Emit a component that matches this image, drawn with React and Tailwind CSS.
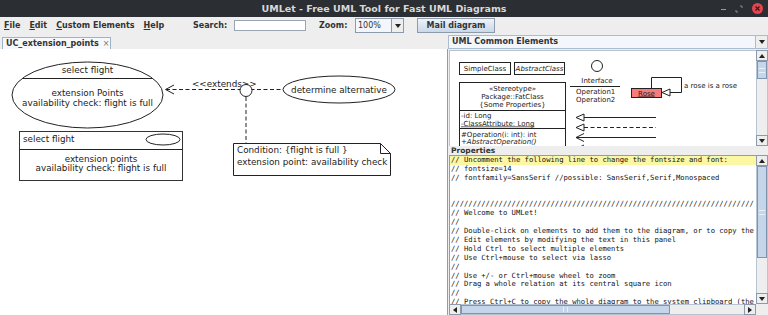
const CODE = [
  "// Uncomment the following line to change the fontsize and font:",
  "// fontsize=14",
  "// fontfamily=SansSerif //possible: SansSerif,Serif,Monospaced",
  "",
  "",
  "//////////////////////////////////////////////////////////////////////",
  "// Welcome to UMLet!",
  "//",
  "// Double-click on elements to add them to the diagram, or to copy the",
  "// Edit elements by modifying the text in this panel",
  "// Hold Ctrl to select multiple elements",
  "// Use Ctrl+mouse to select via lasso",
  "//",
  "// Use +/- or Ctrl+mouse wheel to zoom",
  "// Drag a whole relation at its central square icon",
  "//",
  "// Press Ctrl+C to copy the whole diagram to the system clipboard (the",
];

const TX = "font-['DejaVu_Sans',sans-serif] text-[8.8px] fill-[#222] stroke-none";
const PX = "font-['DejaVu_Sans',sans-serif] text-[7px] fill-[#222] stroke-none";
const PXI = "font-['DejaVu_Sans',sans-serif] text-[7px] italic fill-[#222] stroke-none";

function Arrow({ dir }) {
  const pts = {
    up: "1,6 4,2 7,6",
    down: "1,2 4,6 7,2",
    left: "6,1 2,4 6,7",
    right: "2,1 6,4 2,7",
  }[dir];
  return (
    <svg width="8" height="8" viewBox="0 0 8 8">
      <polygon points={pts} fill="#222" />
    </svg>
  );
}

function ScrollBtn({ dir, cls }) {
  return (
    <div className={`shrink-0 flex items-center justify-center bg-[#eeeeee] border border-[#8c9aab] ${cls}`}>
      <Arrow dir={dir} />
    </div>
  );
}

function TitleBar() {
  return (
    <div className="h-[17px] shrink-0 bg-[#2b2e32] grid grid-cols-[1fr_auto_1fr] items-center">
      <div />
      <div className="text-[9.5px] font-bold text-[#d8d8d8] leading-none">
        UMLet - Free UML Tool for Fast UML Diagrams
      </div>
      <div className="flex justify-end items-center gap-[9px] pr-[5px]">
        <div className="w-[5px] h-[1px] bg-[#9a9a9a] mt-[1px]" />
        <svg width="8" height="8" viewBox="0 0 8 8">
          <path d="M5 1 H7 V3 M3 7 H1 V5" stroke="#8a8a8a" strokeWidth="1" fill="none" />
        </svg>
        <svg width="11" height="11" viewBox="0 0 11 11">
          <circle cx="5.5" cy="5.5" r="5.5" fill="#e2454f" />
          <path d="M3.5 3.5 L7.5 7.5 M7.5 3.5 L3.5 7.5" stroke="#3a1a1c" strokeWidth="1.3" />
        </svg>
      </div>
    </div>
  );
}

function MenuBar() {
  return (
    <div className="h-[17px] shrink-0 flex items-center text-[8px] font-bold text-[#333] leading-none">
      <div className="w-[193px] shrink-0 flex items-center gap-[9px] pl-[4px]">
        <span><span className="underline">F</span>ile</span>
        <span><span className="underline">E</span>dit</span>
        <span><span className="underline">C</span>ustom Elements</span>
        <span><span className="underline">H</span>elp</span>
      </div>
      <span className="w-[41px] shrink-0">Search:</span>
      <div className="w-[72px] shrink-0 h-[11px] bg-white border border-[#9aa5b2]" />
      <span className="w-[36px] shrink-0 ml-[13px]">Zoom:</span>
      <div className="w-[49px] shrink-0 h-[15px] flex border border-[#8c9aab] bg-[#f3f6fa]">
        <div className="flex-1 flex items-center pl-[2px] font-normal text-[8px]">100%</div>
        <div className="w-[12px] flex items-center justify-center border-l border-[#8c9aab] bg-[#eeeeee]">
          <Arrow dir="down" />
        </div>
      </div>
      <div className="ml-[13px] shrink-0 w-[78px] h-[15px] flex items-center justify-center border border-[#8c9aab] bg-gradient-to-b from-[#eef3f9] to-[#c9d8e8]">
        Mail diagram
      </div>
    </div>
  );
}

function Canvas() {
  return (
    <svg className="block" width="447" height="266" viewBox="0 0 447 266">
      <g transform="translate(0,-49)" stroke="#222" strokeWidth="1" fill="none">
        <ellipse cx="87.5" cy="95" rx="75.5" ry="33" fill="white" />
        <line x1="23" y1="78.5" x2="152" y2="78.5" />
        <text x="87.5" y="73" textAnchor="middle" className={TX}>select flight</text>
        <text x="87.5" y="96" textAnchor="middle" className={TX}>extension Points</text>
        <text x="87.5" y="106" textAnchor="middle" className={TX}>availability check: flight is full</text>

        <line x1="166" y1="89.5" x2="283" y2="89.5" strokeDasharray="4 2.5" />
        <polyline points="174,85 165.5,89.5 174,94" />
        <text x="192" y="87" className={TX}>&lt;&lt;extends&gt;&gt;</text>
        <line x1="246" y1="97" x2="246" y2="143" strokeDasharray="4 2.5" />
        <circle cx="246" cy="90.5" r="6" fill="white" />

        <ellipse cx="339" cy="89.5" rx="56" ry="13.5" fill="white" />
        <text x="339" y="93" textAnchor="middle" className={TX}>determine alternative</text>

        <path d="M233.5 143.5 H380.5 L390.5 153.5 V175.5 H233.5 Z" fill="white" />
        <path d="M380.5 143.5 V153.5 H390.5" />
        <text x="237" y="153" className={TX}>Condition: {"{flight is full }"}</text>
        <text x="237" y="165" className={TX}>extension point: availability check</text>

        <rect x="19.5" y="131.5" width="163" height="49" fill="white" stroke="#333" />
        <line x1="19.5" y1="149.5" x2="182.5" y2="149.5" />
        <text x="23" y="142" className={TX}>select flight</text>
        <ellipse cx="163" cy="139.5" rx="17" ry="5.5" />
        <text x="101" y="162" textAnchor="middle" className={TX}>extension points</text>
        <text x="101" y="171" textAnchor="middle" className={TX}>availability check: flight is full</text>
      </g>
    </svg>
  );
}

function Palette() {
  return (
    <svg className="block" width="306" height="96" viewBox="0 0 306 96">
      <g transform="translate(-450,-50)" stroke="#222" strokeWidth="1" fill="none">
        <rect x="459.5" y="61.5" width="51" height="12" />
        <text x="485" y="69.5" textAnchor="middle" className={PX}>SimpleClass</text>
        <rect x="514.5" y="61.5" width="50" height="12" />
        <text x="539.5" y="69.5" textAnchor="middle" className={PXI}>AbstractClass</text>

        <rect x="459.5" y="81.5" width="106" height="80" />
        <text x="512.5" y="89.5" textAnchor="middle" className={PX}>«Stereotype»</text>
        <text x="512.5" y="97.5" textAnchor="middle" className={PX}>Package::FatClass</text>
        <text x="512.5" y="105.5" textAnchor="middle" className={PX}>{"{Some Properties}"}</text>
        <line x1="459.5" y1="109.5" x2="565.5" y2="109.5" />
        <text x="461" y="116.5" className={PX}>-id: Long</text>
        <text x="461" y="124.5" className={PX} textDecoration="underline">-ClassAttribute: Long</text>
        <line x1="459.5" y1="127.5" x2="565.5" y2="127.5" />
        <text x="461" y="135.5" className={PX}>#Operation(i: int): int</text>
        <text x="461" y="143" className={PXI}>+AbstractOperation()</text>

        <circle cx="597" cy="65" r="5.5" />
        <text x="597" y="81.5" textAnchor="middle" className={PX}>Interface</text>
        <line x1="570" y1="85.5" x2="620" y2="85.5" />
        <text x="576" y="93" className={PX}>Operation1</text>
        <text x="576" y="100.5" className={PX}>Operation2</text>

        <polyline points="651.5,87 651.5,76.5 681.5,76.5 681.5,91.5 670,91.5" />
        <polygon points="662,91.5 670,88 670,95" fill="white" />
        <rect x="631.5" y="87.5" width="30" height="9" fill="#f77b7b" />
        <text x="646.5" y="94.5" textAnchor="middle" className={PX} textDecoration="underline">Rose</text>
        <text x="684" y="86.5" className={PX}>a rose is a rose</text>

        <line x1="584" y1="116.5" x2="656" y2="116.5" />
        <polygon points="576,116.5 584,113 584,120" fill="white" />
        <line x1="584" y1="126.5" x2="656" y2="126.5" strokeDasharray="4 2.5" />
        <polygon points="576,126.5 584,123 584,130" fill="white" />
        <line x1="576" y1="136.5" x2="656" y2="136.5" />
        <polyline points="584,132.5 576,136.5 584,140.5" />
        <polyline points="584,144 576,148 584,152" />
      </g>
    </svg>
  );
}

function Thumb({ cls }) {
  return (
    <div className={`shrink-0 border border-[#7f95ae] bg-[#c6d6ea] flex items-center justify-center ${cls}`}>
      <div className="w-[6px] h-[5px] border-y border-[#e8f0f8]" />
    </div>
  );
}

function VScroll({ thumbCls }) {
  return (
    <div className="w-[12px] shrink-0 flex flex-col bg-[#eeeeee]">
      <ScrollBtn dir="up" cls="h-[11px]" />
      <div className="flex-1 flex flex-col border-x border-[#b8c4d2]">
        <Thumb cls={thumbCls} />
      </div>
      <ScrollBtn dir="down" cls="h-[11px]" />
    </div>
  );
}

function LeftPane() {
  return (
    <div className="w-[448px] shrink-0 flex flex-col">
      <div className="h-[15px] shrink-0 flex items-end pl-[2px]">
        <div className="w-[109px] h-[12px] flex items-center bg-[#f6f8fb] border-t border-l border-r border-[#9fb1c4] pl-[3px] text-[8px] font-bold leading-none">
          <span>UC_extension_points</span>
          <span className="ml-[4px] font-normal text-[#777] text-[8px]">×</span>
        </div>
      </div>
      <div className="flex-1 overflow-hidden bg-white border-r border-[#8e9db0]">
        <Canvas />
      </div>
    </div>
  );
}

function RightPane() {
  return (
    <div className="w-[320px] shrink-0 flex flex-col">
      <div className="h-[15px] shrink-0 pt-[1px]">
        <div className="h-[14px] flex border border-[#a9bcd0] bg-[#f3f6fa]">
          <div className="flex-1 flex items-center pl-[3px] text-[8px] font-bold leading-none">UML Common Elements</div>
          <div className="w-[12px] flex items-center justify-center border-l border-[#a9bcd0] bg-[#eeeeee]">
            <Arrow dir="down" />
          </div>
        </div>
      </div>
      <div className="h-[97px] shrink-0 flex pt-[1px] pl-[1px]">
        <div className="flex-1 overflow-hidden bg-white border-l border-t border-[#b8c4d2]">
          <Palette />
        </div>
        <VScroll thumbCls="h-[18px]" />
      </div>
      <div className="h-[9px] shrink-0 pl-[3px] text-[7.5px] font-bold leading-[9px]">Properties</div>
      <div className="h-[149px] shrink-0 flex pl-[1px]">
        <div className="flex-1 min-w-0 overflow-hidden bg-white border-l border-t border-[#8e9db0] font-['DejaVu_Sans_Mono',monospace] text-[7.2px] leading-[8.9px] text-[#111]">
          {CODE.map((l, i) => (
            <div
              key={i}
              className={`h-[8.9px] whitespace-pre pl-[1px] ${i === 0 ? "bg-[#fbf7a3]" : ""}`}
            >
              {l}
            </div>
          ))}
        </div>
        <VScroll thumbCls="h-[92px]" />
      </div>
      <div className="h-[11px] shrink-0 flex pl-[1px]">
        <ScrollBtn dir="left" cls="w-[12px]" />
        <div className="flex-1 flex bg-[#eeeeee] border-y border-[#b8c4d2]">
          <div className="w-[209px] border border-[#7f95ae] bg-[#c6d6ea] flex items-center justify-center">
            <div className="w-[5px] h-[5px] border-x border-[#e8f0f8]" />
          </div>
        </div>
        <ScrollBtn dir="right" cls="w-[12px]" />
        <div className="w-[12px] shrink-0 bg-[#eeeeee]" />
      </div>
    </div>
  );
}

export default function App() {
  return (
    <div className="w-[768px] h-[315px] flex flex-col overflow-hidden bg-[#eeeeee] font-['DejaVu_Sans',sans-serif] text-[#333]">
      <TitleBar />
      <MenuBar />
      <div className="flex flex-1 min-h-0">
        <LeftPane />
        <RightPane />
      </div>
    </div>
  );
}
